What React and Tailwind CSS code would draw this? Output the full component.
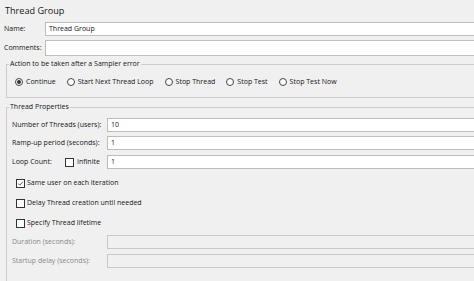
import React from 'react';

function Radio({ label, checked }) {
  return (
    <label className="flex items-center gap-[3px]">
      <span className="flex h-[8px] w-[8px] items-center justify-center rounded-full border border-[#444] bg-white">
        {checked && <span className="h-[4px] w-[4px] rounded-full bg-[#333]" />}
      </span>
      <span>{label}</span>
    </label>
  );
}

function Check({ checked }) {
  return (
    <span className="flex h-[9px] w-[9px] items-center justify-center border border-[#333] bg-white">
      {checked && (
        <svg viewBox="0 0 9 9" className="h-[9px] w-[9px]">
          <path d="M1.5 4.6 L3.6 6.7 L7.6 2.2" fill="none" stroke="#333" strokeWidth="1" />
        </svg>
      )}
    </span>
  );
}

function Field({ value, disabled, h = 'h-[14px]' }) {
  return (
    <div
      className={`flex-1 ${h} flex items-center border pl-[3px] ${
        disabled ? 'border-[#c9c9c9] bg-[#f0f0f0]' : 'border-[#bdbdbd] bg-white'
      }`}
    >
      {value}
    </div>
  );
}

export default function App() {
  return (
    <div className="h-[281px] w-[474px] overflow-hidden bg-[#f0f0f0] font-['Open_Sans',sans-serif] text-[7px] leading-[10px] text-[#151515]">
      <div className="w-[490px]">
        <div className="h-[22px] pl-[5px] pt-[5px] text-[9.1px] leading-[12px]">Thread Group</div>

        <div className="flex h-[14px] items-center">
          <span className="w-[45px] pl-[4px]">Name:</span>
          <Field value="Thread Group" />
        </div>
        <div className="mt-[4px] flex h-[16px] items-center">
          <span className="w-[45px] pl-[4px]">Comments:</span>
          <Field h="h-[16px]" />
        </div>

        <fieldset className="ml-[6px] mt-[3px] border border-[#cdcdcd] pb-[10px]">
          <legend className="ml-[2px] px-[1px] leading-[10px]">Action to be taken after a Sampler error</legend>
          <div className="mt-[8px] flex h-[10px] items-center gap-[11px] pl-[8px]">
            <Radio label="Continue" checked />
            <Radio label="Start Next Thread Loop" />
            <Radio label="Stop Thread" />
            <Radio label="Stop Test" />
            <Radio label="Stop Test Now" />
          </div>
        </fieldset>

        <fieldset className="ml-[6px] mt-[4px] h-[240px] border border-[#cdcdcd]">
          <legend className="ml-[2px] px-[1px] leading-[10px]">Thread Properties</legend>

          <div className="mt-[6px] flex h-[14px] items-center">
            <span className="w-[100px] pl-[5px]">Number of Threads (users):</span>
            <Field value="10" />
          </div>
          <div className="mt-[4px] flex h-[14px] items-center">
            <span className="w-[100px] pl-[5px]">Ramp-up period (seconds):</span>
            <Field value="1" />
          </div>
          <div className="mt-[5px] flex h-[14px] items-center">
            <span className="w-[58px] pl-[5px]">Loop Count:</span>
            <Check />
            <span className="w-[33px] pl-[3px]">Infinite</span>
            <Field value="1" />
          </div>

          <div className="mt-[9px] flex h-[10px] items-center gap-[2px] pl-[9px]">
            <Check checked />
            <span>Same user on each iteration</span>
          </div>
          <div className="mt-[10px] flex h-[10px] items-center gap-[2px] pl-[9px]">
            <Check />
            <span>Delay Thread creation until needed</span>
          </div>
          <div className="mt-[10px] flex h-[10px] items-center gap-[2px] pl-[9px]">
            <Check />
            <span>Specify Thread lifetime</span>
          </div>

          <div className="mt-[7px] flex h-[14px] items-center text-[#8a8a8a]">
            <span className="w-[100px] pl-[5px]">Duration (seconds):</span>
            <Field disabled />
          </div>
          <div className="mt-[5px] flex h-[14px] items-center text-[#8a8a8a]">
            <span className="w-[100px] pl-[5px]">Startup delay (seconds):</span>
            <Field disabled />
          </div>
        </fieldset>
      </div>
    </div>
  );
}
